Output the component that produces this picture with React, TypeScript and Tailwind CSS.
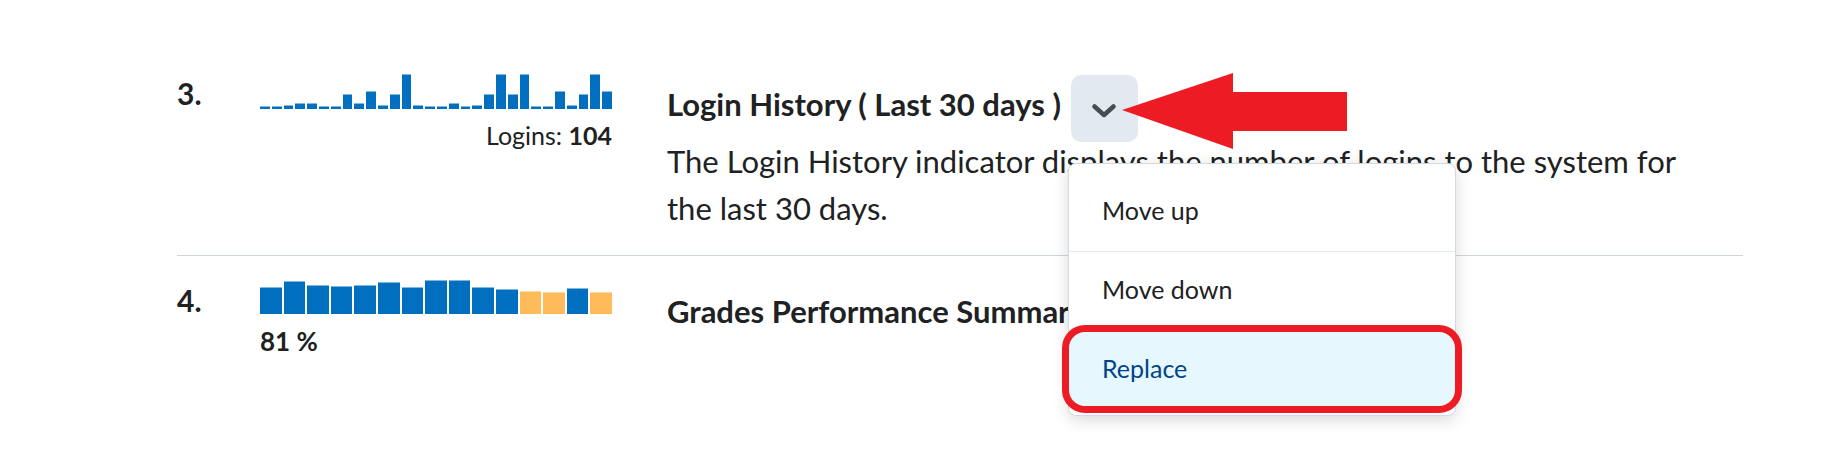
import React from "react";

const loginBars = [3, 3, 4, 6, 6, 3, 3, 15, 6, 18, 4, 15, 35, 4, 3, 3, 6, 3, 4, 15, 35, 15, 35, 3, 3, 18, 4, 15, 35, 18];
const gradeBars: { h: number; c: "b" | "o" }[] = [
  { h: 27, c: "b" },
  { h: 33, c: "b" },
  { h: 29, c: "b" },
  { h: 28, c: "b" },
  { h: 29, c: "b" },
  { h: 32, c: "b" },
  { h: 27, c: "b" },
  { h: 34, c: "b" },
  { h: 34, c: "b" },
  { h: 27, c: "b" },
  { h: 25, c: "b" },
  { h: 23, c: "o" },
  { h: 22, c: "o" },
  { h: 26, c: "b" },
  { h: 22, c: "o" },
];

export default function App() {
  return (
    <div className="relative w-[1847px] h-[457px] overflow-hidden bg-white font-['Lato',sans-serif] text-[#202122]">
      <div className="pl-[177px] pr-[104px]">
        {/* Row 3 */}
        <div className="flex items-start pt-[70px] pb-[23px] border-b border-[#cdd5dc]">
          <div className="w-[83px] text-[30px] leading-[47px] font-bold">3.</div>
          <div className="w-[352px] mt-[4px] flex flex-col items-end">
            <div className="flex items-end gap-[2px] h-[35px] w-full">
              {loginBars.map((h, i) => (
                <div key={i} className="flex-1 bg-[#006fbf] border-t border-[#7fb7df]" style={{ height: h }} />
              ))}
            </div>
            <div className="mt-[10px] text-[25px] leading-[32px]">
              Logins: <span className="font-bold">104</span>
            </div>
          </div>
          <div className="ml-[55px] w-[1030px]">
            <div className="mt-[11px] flex items-start gap-[10px]">
              <div className="text-[31px] leading-[47px] font-bold">Login History ( Last 30 days )</div>
              <div className="-mt-[6px] -mb-[4px] w-[67px] h-[67px] rounded-[10px] bg-[#e3e9f1] flex items-center justify-center">
                <svg width="26" height="16" viewBox="0 0 26 16" className="mt-[4px]">
                  <path d="M3.5 3.5 L13 12 L22.5 3.5" fill="none" stroke="#494c4e" strokeWidth="4.5" strokeLinecap="round" strokeLinejoin="round" />
                </svg>
              </div>
            </div>
            <p className="text-[31px] leading-[47px]">
              The Login History indicator displays the number of logins to the system for the last 30 days.
            </p>
          </div>
        </div>

        {/* Row 4 */}
        <div className="flex items-start pt-[21px]">
          <div className="w-[83px] text-[30px] leading-[47px] font-bold">4.</div>
          <div className="w-[352px] mt-[3px] flex flex-col items-start">
            <div className="flex items-end gap-[2px] h-[34px] w-full">
              {gradeBars.map((b, i) => (
                <div
                  key={i}
                  className={b.c === "b" ? "flex-1 bg-[#006fbf] border-t border-[#7fb7df]" : "flex-1 bg-[#ffba59] border-t border-[#ffd9a3]"}
                  style={{ height: b.h }}
                />
              ))}
            </div>
            <div className="mt-[11px] text-[26px] leading-[32px] font-bold">81 %</div>
          </div>
          <div className="ml-[55px] w-[1030px]">
            <div className="mt-[11px] text-[31px] leading-[47px] font-bold">Grades Performance Summary</div>
          </div>
        </div>
      </div>

      {/* Dropdown menu */}
      <div className="absolute left-[1068px] top-[163px] w-[388px] bg-white border border-[#d3d9e3] rounded-[8px] shadow-[0_4px_16px_rgba(0,0,0,0.15)] pt-[9px] pb-[6px] text-[25px] leading-[32px]">
        <div className="pl-[33px] pt-[21px] pb-[25px]">Move up</div>
        <div className="border-t border-[#e3e9f1]" />
        <div className="pl-[33px] pt-[21px] pb-[25px]">Move down</div>
        <div className="border-t border-[#e3e9f1]" />
        <div className="pl-[33px] pt-[21px] pb-[25px] bg-[#e6f7fe] text-[#004489]">Replace</div>
      </div>

      {/* Annotation: red rounded box */}
      <div className="absolute left-[1062px] top-[325px] w-[400px] h-[88px] rounded-[23px] border-[7px] border-[#ed1c24]" />

      {/* Annotation: red arrow */}
      <svg className="absolute left-[1118px] top-[70px]" width="232" height="83" viewBox="0 0 232 83">
        <polygon points="4,40 115,3 115,22 229,22 229,61 115,61 115,79" fill="#ed1c24" />
      </svg>
    </div>
  );
}
